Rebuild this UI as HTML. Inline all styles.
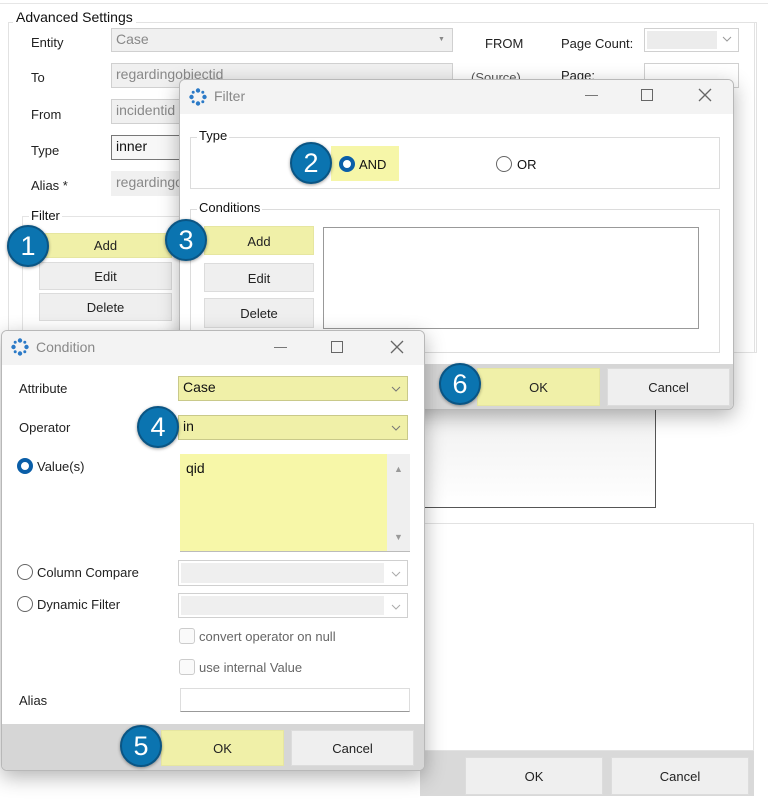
<!DOCTYPE html>
<html><head><meta charset="utf-8"><style>
*{box-sizing:border-box;margin:0;padding:0}
body{width:768px;height:803px;position:relative;overflow:hidden;background:#fff;font-family:"Liberation Sans",sans-serif;font-size:13px;color:#111}
.a{position:absolute}
.lbl{position:absolute;font-size:13px;color:#222}
.fld{position:absolute;background:#f0f0f0;border:1px solid #d0d0d0;color:#888;font-size:14px;padding:2px 4px;white-space:nowrap;overflow:hidden}
.btn{position:absolute;background:#efefef;border:1px solid #dcdcdc;text-align:center;font-size:13px;color:#222}
.yl{background:#f0f0a8;border-color:#e6e6a0}
.badge{position:absolute;width:42px;height:42px;border-radius:50%;background:#0b74b0;border:2px solid #0a5584;color:#fff;font-size:27px;text-align:center;line-height:38px;box-shadow:0 1px 3px rgba(0,0,0,.4)}
.dlg{position:absolute;background:#fff;border:1px solid #b8b8b8;border-radius:6px;box-shadow:0 6px 20px rgba(0,0,0,.3);overflow:hidden}
.tb{position:absolute;left:0;right:0;top:0;height:34px;background:#f3f3f3}
.tt{position:absolute;top:8px;left:34px;font-size:14px;color:#888}
.grp{position:absolute;border:1px solid #dcdcdc}
.gt{position:absolute;top:-9px;left:6px;background:#fff;padding:0 2px;font-size:13px}
.radio{position:absolute;width:16px;height:16px;border-radius:50%;border:1.5px solid #666;background:#fff}
.radio.on{border:4px solid #0a5ea8}
.chev{position:absolute}
.cb{position:absolute;width:16px;height:16px;border:1px solid #ccc;border-radius:3px;background:#fafafa}
</style></head><body>
<div class="a" style="left:0;top:3px;width:768px;height:1px;background:#e6e6e6"></div>
<div class="a" style="left:8px;top:22px;width:749px;height:330px;border:1px solid #e2e2e2;border-bottom:none"></div>
<div class="a" style="left:13px;top:9px;background:#fff;padding:0 3px;font-size:14px">Advanced Settings</div>
<div class="lbl" style="left:31px;top:35px">Entity</div>
<div class="fld" style="left:111px;top:28px;width:342px;height:24px">Case</div>
<div class="a" style="left:438px;top:36px;font-size:7px;color:#888">▼</div>
<div class="lbl" style="left:31px;top:70px">To</div>
<div class="fld" style="left:111px;top:63px;width:342px;height:25px">regardingobjectid</div>
<div class="lbl" style="left:31px;top:107px">From</div>
<div class="fld" style="left:111px;top:99px;width:80px;height:25px">incidentid</div>
<div class="lbl" style="left:31px;top:143px">Type</div>
<div class="fld" style="left:111px;top:135px;width:80px;height:25px;background:#f7f7f7;border-color:#777;color:#111">inner</div>
<div class="lbl" style="left:31px;top:178px">Alias *</div>
<div class="fld" style="left:111px;top:171px;width:80px;height:25px;border-color:#f0f0f0">regardingo</div>
<div class="lbl" style="left:485px;top:36px">FROM</div>
<div class="lbl" style="left:561px;top:36px">Page Count:</div>
<div class="fld" style="left:644px;top:28px;width:95px;height:24px;background:#fff"><div class="a" style="left:2px;top:2px;width:70px;height:18px;background:#ececec"></div><svg class="a" style="left:77px;top:7px" width="10" height="6"><path d="M1 1L5 5L9 1" fill="none" stroke="#999"/></svg></div>
<div class="lbl" style="left:471px;top:70px;color:#555">(Source)</div>
<div class="lbl" style="left:561px;top:68px">Page:</div>
<div class="fld" style="left:644px;top:63px;width:95px;height:25px;background:#fff"></div>
<div class="grp" style="left:22px;top:216px;width:160px;height:120px;border-color:#e4e4e4"><div class="gt" style="left:6px;font-size:13px">Filter</div></div>
<div class="btn yl" style="left:39px;top:233px;width:133px;height:25px;line-height:24px">Add</div>
<div class="btn" style="left:39px;top:262px;width:133px;height:28px;line-height:28px">Edit</div>
<div class="btn" style="left:39px;top:293px;width:133px;height:28px;line-height:28px">Delete</div>
<div class="a" style="left:754px;top:22px;width:1px;height:330px;background:#e2e2e2"></div>
<div class="a" style="left:420px;top:352px;width:337px;height:1px;background:#e2e2e2"></div>
<div class="a" style="left:424px;top:395px;width:232px;height:113px;border:1px solid #555;border-left:none;background:linear-gradient(#eee,#fff)"></div>
<div class="a" style="left:424px;top:523px;width:330px;height:228px;border:1px solid #e2e2e2;background:#fff"></div>
<div class="a" style="left:420px;top:751px;width:334px;height:45px;background:#d9d9d9"></div>
<div class="btn" style="left:465px;top:757px;width:138px;height:38px;line-height:38px">OK</div>
<div class="btn" style="left:611px;top:757px;width:138px;height:38px;line-height:38px">Cancel</div>

<!-- Filter dialog -->
<div class="dlg" style="left:179px;top:79px;width:555px;height:331px">
<div class="tb"></div>
<svg class="a" style="left:9px;top:8px" width="18" height="18" viewBox="0 0 18 18"><g fill="#2b7ac7"><circle cx="9" cy="2.5" r="2.2"/><circle cx="9" cy="15.5" r="2.2"/><circle cx="2.5" cy="9" r="2.2"/><circle cx="15.5" cy="9" r="2.2"/><circle cx="4.2" cy="4.2" r="1.5"/><circle cx="13.8" cy="4.2" r="1.5"/><circle cx="4.2" cy="13.8" r="1.5"/><circle cx="13.8" cy="13.8" r="1.5"/></g></svg>
<div class="tt">Filter</div>
<div class="a" style="left:405px;top:15px;width:13px;height:1px;background:#777"></div>
<div class="a" style="left:461px;top:9px;width:12px;height:12px;border:1px solid #666"></div>
<svg class="a" style="left:518px;top:8px" width="14" height="14"><path d="M1 1L13 13M13 1L1 13" stroke="#666" stroke-width="1.3"/></svg>
<div class="grp" style="left:10px;top:57px;width:530px;height:52px"><div class="gt" style="top:-10px">Type</div></div>
<div class="a" style="left:151px;top:66px;width:68px;height:35px;background:#f6f6a8"></div>
<div class="radio on" style="left:159px;top:76px"></div>
<div class="a" style="left:179px;top:77px;font-size:13px">AND</div>
<div class="radio" style="left:316px;top:76px"></div>
<div class="a" style="left:337px;top:77px;font-size:13px">OR</div>
<div class="grp" style="left:10px;top:129px;width:530px;height:144px"><div class="gt" style="top:-10px">Conditions</div></div>
<div class="btn yl" style="left:24px;top:146px;width:110px;height:29px;line-height:29px">Add</div>
<div class="btn" style="left:24px;top:183px;width:110px;height:29px;line-height:29px">Edit</div>
<div class="btn" style="left:24px;top:218px;width:110px;height:30px;line-height:30px">Delete</div>
<div class="a" style="left:143px;top:147px;width:376px;height:102px;border:1px solid #999"></div>
<div class="a" style="left:0;top:284px;width:555px;height:47px;background:#d6d6d6"></div>
<div class="btn yl" style="left:297px;top:288px;width:123px;height:38px;line-height:38px">OK</div>
<div class="btn" style="left:427px;top:288px;width:123px;height:38px;line-height:38px">Cancel</div>
</div>

<!-- Condition dialog -->
<div class="dlg" style="left:1px;top:330px;width:424px;height:441px">
<div class="tb"></div>
<svg class="a" style="left:9px;top:7px" width="18" height="18" viewBox="0 0 18 18"><g fill="#2b7ac7"><circle cx="9" cy="2.5" r="2.2"/><circle cx="9" cy="15.5" r="2.2"/><circle cx="2.5" cy="9" r="2.2"/><circle cx="15.5" cy="9" r="2.2"/><circle cx="4.2" cy="4.2" r="1.5"/><circle cx="13.8" cy="4.2" r="1.5"/><circle cx="4.2" cy="13.8" r="1.5"/><circle cx="13.8" cy="13.8" r="1.5"/></g></svg>
<div class="tt">Condition</div>
<div class="a" style="left:272px;top:16px;width:13px;height:1px;background:#777"></div>
<div class="a" style="left:329px;top:10px;width:12px;height:12px;border:1px solid #666"></div>
<svg class="a" style="left:388px;top:9px" width="14" height="14"><path d="M1 1L13 13M13 1L1 13" stroke="#666" stroke-width="1.3"/></svg>
<div class="lbl" style="left:17px;top:50px">Attribute</div>
<div class="fld" style="left:176px;top:45px;width:230px;height:25px;background:#f0f0a8;border-color:#c9c98a;color:#111">Case</div>
<svg class="chev" style="left:389px;top:55px" width="10" height="6"><path d="M1 1L5 5L9 1" fill="none" stroke="#777"/></svg>
<div class="lbl" style="left:17px;top:89px">Operator</div>
<div class="fld" style="left:176px;top:84px;width:230px;height:25px;background:#f0f0a8;border-color:#c9c98a;color:#111">in</div>
<svg class="chev" style="left:389px;top:94px" width="10" height="6"><path d="M1 1L5 5L9 1" fill="none" stroke="#777"/></svg>
<div class="radio on" style="left:15px;top:127px"></div>
<div class="lbl" style="left:35px;top:128px">Value(s)</div>
<div class="a" style="left:178px;top:123px;width:230px;height:98px;background:#f7f7a8;border-bottom:1px solid #bbb"><div class="a" style="left:6px;top:6px;font-size:14px">qid</div><div class="a" style="right:0;top:0;width:23px;height:97px;background:#efefef"><div class="a" style="left:7px;top:10px;font-size:9px;color:#999">▲</div><div class="a" style="left:7px;top:78px;font-size:9px;color:#999">▼</div></div></div>
<div class="radio" style="left:15px;top:233px"></div>
<div class="lbl" style="left:35px;top:234px">Column Compare</div>
<div class="fld" style="left:176px;top:229px;width:230px;height:26px;background:#fff"><div class="a" style="left:2px;top:2px;width:203px;height:20px;background:#efefef"></div><svg class="a" style="left:212px;top:10px" width="10" height="6"><path d="M1 1L5 5L9 1" fill="none" stroke="#aaa"/></svg></div>
<div class="radio" style="left:15px;top:265px"></div>
<div class="lbl" style="left:35px;top:266px">Dynamic Filter</div>
<div class="fld" style="left:176px;top:262px;width:230px;height:25px;background:#fff"><div class="a" style="left:2px;top:2px;width:203px;height:19px;background:#efefef"></div><svg class="a" style="left:212px;top:10px" width="10" height="6"><path d="M1 1L5 5L9 1" fill="none" stroke="#aaa"/></svg></div>
<div class="cb" style="left:177px;top:297px"></div>
<div class="lbl" style="left:197px;top:298px;color:#666">convert operator on null</div>
<div class="cb" style="left:177px;top:328px"></div>
<div class="lbl" style="left:197px;top:329px;color:#666">use internal Value</div>
<div class="lbl" style="left:17px;top:362px">Alias</div>
<div class="a" style="left:178px;top:357px;width:230px;height:24px;border:1px solid #ddd;border-bottom-color:#999"></div>
<div class="a" style="left:0;top:393px;width:424px;height:48px;background:#d6d6d6"></div>
<div class="btn yl" style="left:159px;top:399px;width:123px;height:36px;line-height:36px">OK</div>
<div class="btn" style="left:289px;top:399px;width:123px;height:36px;line-height:36px">Cancel</div>
</div>

<div class="badge" style="left:7px;top:225px">1</div>
<div class="badge" style="left:290px;top:142px">2</div>
<div class="badge" style="left:165px;top:219px">3</div>
<div class="badge" style="left:137px;top:406px">4</div>
<div class="badge" style="left:120px;top:725px">5</div>
<div class="badge" style="left:439px;top:363px">6</div>
</body></html>
